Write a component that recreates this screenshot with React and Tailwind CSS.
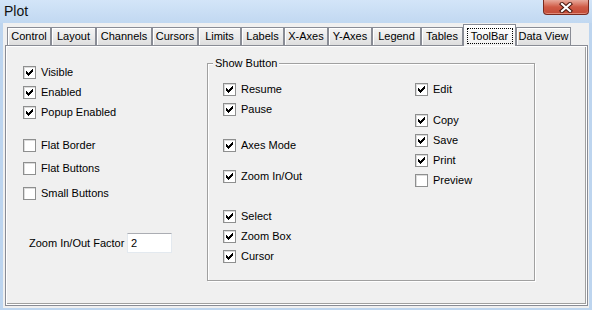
import React from "react";

const tabs = [
  { label: "Control", w: "w-[44px]" },
  { label: "Layout", w: "w-[45px]" },
  { label: "Channels", w: "w-[56px]" },
  { label: "Cursors", w: "w-[46px]" },
  { label: "Limits", w: "w-[43px]" },
  { label: "Labels", w: "w-[43px]" },
  { label: "X-Axes", w: "w-[44px]" },
  { label: "Y-Axes", w: "w-[44px]" },
  { label: "Legend", w: "w-[49px]" },
  { label: "Tables", w: "w-[42px]" },
  { label: "ToolBar", w: "w-[53px]", active: true },
  { label: "Data View", w: "w-[55px]" },
];

const CheckMark = () => (
  <svg width="7" height="7" viewBox="0 0 7 7" shapeRendering="crispEdges">
    <path
      d="M6 0h1v1h-1zM5 1h2v1h-2zM0 2h1v1h-1zM4 2h3v1h-3zM0 3h2v1h-2zM3 3h3v1h-3zM0 4h5v1h-5zM1 5h3v1h-3zM2 6h1v1h-1z"
      fill="#000"
    />
  </svg>
);

const CheckBox = ({ label, checked, className = "" }) => (
  <div className={`flex items-center h-[13px] ${className}`}>
    <span className="flex items-center justify-center w-[13px] h-[13px] shrink-0 border border-[#8e8f8f] bg-white shadow-[inset_1px_1px_0_#dcdcdc]">
      {checked && <CheckMark />}
    </span>
    <span className="ml-[5px] leading-[13px] whitespace-nowrap">{label}</span>
  </div>
);

const Tab = ({ label, w, active }) =>
  active ? (
    <div
      className={`${w} h-[22px] -mb-px relative z-10 flex items-start justify-center pt-[3px] border-t border-l border-r border-[#898c95] bg-linear-to-b from-white to-[#f0f0f0]`}
    >
      <span className="w-[46px] h-[16px] flex items-center justify-center border border-dotted border-black leading-[13px]">
        {label}
      </span>
    </div>
  ) : (
    <div
      className={`${w} h-[18px] flex items-center justify-center border-t border-l border-r border-[#898c95] bg-linear-to-b from-[#f4f4f4] via-[#ebebeb] to-[#dedede] shadow-[inset_1px_1px_0_#fff] leading-[13px] whitespace-nowrap`}
    >
      {label}
    </div>
  );

export default function App() {
  return (
    <div className="w-[592px] h-[310px] overflow-hidden bg-[#bdd5ef] flex flex-col text-[11px] text-black font-['Liberation_Sans',Arial,sans-serif]">
      {/* title bar */}
      <div className="h-[23px] flex justify-between bg-linear-to-b from-[#d3e5f8] to-[#c1d8f1]">
        <span className="pl-[4px] pt-[2px] text-[14px] leading-[18px] text-[#111]">Plot</span>
        <div className="mr-[3px] w-[46px] h-[15px] flex items-center justify-center rounded-b-[4px] border border-t-0 border-[#7a2a1e] bg-linear-to-b from-[#e7a99b] via-[#cf5a45] to-[#c24a36] shadow-[inset_0_-1px_0_#e08a78]">
          <svg width="14" height="11" viewBox="0 0 14 11">
            <path d="M3 2 L11 9 M11 2 L3 9" stroke="#4a1810" strokeWidth="4.2" strokeLinecap="square" />
            <path d="M3 2 L11 9 M11 2 L3 9" stroke="#fff" strokeWidth="2.2" strokeLinecap="square" />
          </svg>
        </div>
      </div>

      {/* client area */}
      <div className="mx-[3px] h-[285px] bg-[#f0f0f0] pt-[1px] pl-[2px] pr-[1px] flex flex-col">
        <div className="flex items-end h-[21px] pl-[2px]">
          {tabs.map((t) => (
            <Tab key={t.label} {...t} />
          ))}
        </div>

        <div className="h-[261px] flex border border-[#898c95] shadow-[inset_1px_1px_0_#fff,inset_-1px_-1px_0_#fff,inset_-2px_-2px_0_#a0a0a0]">
          {/* left column */}
          <div className="w-[201px] shrink-0 flex flex-col pl-[17px]">
            <CheckBox label="Visible" checked className="mt-[20px]" />
            <CheckBox label="Enabled" checked className="mt-[7px]" />
            <CheckBox label="Popup Enabled" checked className="mt-[7px]" />
            <CheckBox label="Flat Border" className="mt-[20px]" />
            <CheckBox label="Flat Buttons" className="mt-[10px]" />
            <CheckBox label="Small Buttons" className="mt-[12px]" />
            <div className="mt-[33px] ml-[6px] flex items-center h-[20px]">
              <span className="w-[98px] whitespace-nowrap">Zoom In/Out Factor</span>
              <div className="w-[45px] h-[20px] flex items-center pl-[3px] bg-white border border-[#e3e9ef] border-t-[#abadb3]">
                2
              </div>
            </div>
          </div>

          {/* Show Button group */}
          <div className="relative mt-[17px] w-[328px] h-[218px] border border-[#a0a0a0] shadow-[1px_1px_0_#fff,inset_1px_1px_0_#fff] flex pl-[15px]">
            <span className="absolute -top-[7px] left-[5px] px-[2px] bg-[#f0f0f0] leading-[13px]">
              Show Button
            </span>
            <div className="w-[192px] flex flex-col">
              <CheckBox label="Resume" checked className="mt-[19px]" />
              <CheckBox label="Pause" checked className="mt-[7px]" />
              <CheckBox label="Axes Mode" checked className="mt-[23px]" />
              <CheckBox label="Zoom In/Out" checked className="mt-[18px]" />
              <CheckBox label="Select" checked className="mt-[27px]" />
              <CheckBox label="Zoom Box" checked className="mt-[7px]" />
              <CheckBox label="Cursor" checked className="mt-[7px]" />
            </div>
            <div className="flex flex-col">
              <CheckBox label="Edit" checked className="mt-[19px]" />
              <CheckBox label="Copy" checked className="mt-[18px]" />
              <CheckBox label="Save" checked className="mt-[7px]" />
              <CheckBox label="Print" checked className="mt-[7px]" />
              <CheckBox label="Preview" className="mt-[7px]" />
            </div>
          </div>
        </div>
      </div>
    </div>
  );
}
